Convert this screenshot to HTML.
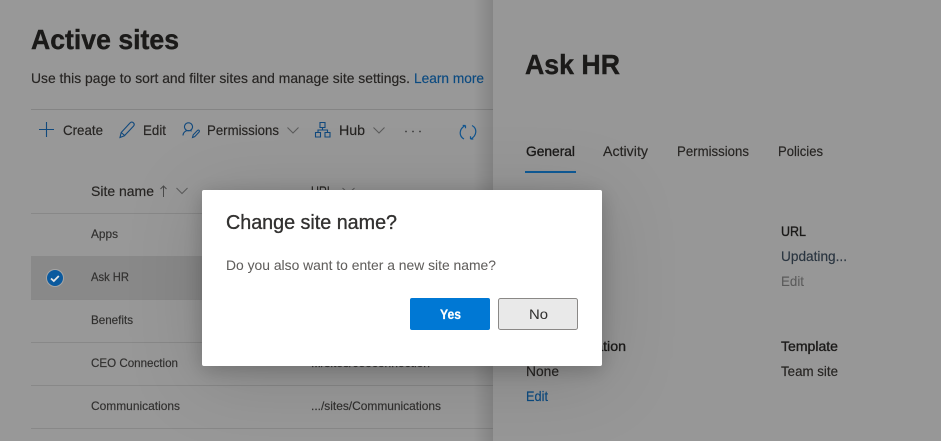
<!DOCTYPE html>
<html lang="en"><head><meta charset="utf-8"><title>Active sites</title>
<style>
html,body{margin:0;padding:0;width:941px;height:441px;overflow:hidden;background:#989898}
svg{display:block;position:absolute;left:0;top:0}
text{font-family:"Liberation Sans",Arial,sans-serif;white-space:pre;fill:currentColor;stroke:currentColor;stroke-width:.16}
text.b{font-weight:bold;stroke-width:.4}
text.m{stroke-width:.34}
text.l{stroke-width:.04}
.i{fill:none;stroke:#11497d;stroke-width:1.1}
.c{fill:none;stroke:#5a5a5a;stroke-width:1}
</style></head><body>
<svg width="941" height="441" viewBox="0 0 941 441" xmlns="http://www.w3.org/2000/svg">
<defs>
<linearGradient id="s" x1="0" x2="1" y1="0" y2="0"><stop offset="0" stop-color="#000" stop-opacity="0"/><stop offset="1" stop-color="#000" stop-opacity=".13"/></linearGradient>
</defs>
<rect width="941" height="441" fill="#989898"/>
<text x="31" y="49" class="b" font-size="28" color="#1b1a19" textLength="148" lengthAdjust="spacingAndGlyphs">Active sites</text>
<text x="31" y="83" font-size="14" color="#262422" textLength="379" lengthAdjust="spacingAndGlyphs">Use this page to sort and filter sites and manage site settings.</text>
<text x="414" y="83" font-size="14" color="#0b4a80" textLength="70" lengthAdjust="spacingAndGlyphs">Learn more</text>
<rect x="31" y="109" width="462" height="1" fill="#848484"/>

<path class="i" d="M46.500 122v15M39 129.500h15"/>
<text x="63" y="135" font-size="14" color="#262422" textLength="40" lengthAdjust="spacingAndGlyphs">Create</text>
<path class="i" d="M120 137.500l1.200-5 8.800-9.500c1-1 2.300-1.200 3.400-.2s1 2.300 0 3.400l-9 9.600zM121.200 132.500l3.400 3"/>
<text x="143" y="135" font-size="14" color="#262422" textLength="23" lengthAdjust="spacingAndGlyphs">Edit</text>
<path class="i" d="M188.500 122.800a4 4 0 1 0 .01 0zM183 135.500c0-3 2.500-5 5.500-5 1.300 0 2.300.2 3.200.7M192.500 137.500l.7-2.600 4.300-4.500c1.400-1 2.500.6 1.500 1.700l-4.300 4.600z"/>
<text x="207" y="135" font-size="14" color="#262422" textLength="72" lengthAdjust="spacingAndGlyphs">Permissions</text>
<path class="c" d="M287.500 127.500l5.500 5.500 5.500-5.500"/>
<path class="i" d="M320 122.500h5v5h-5zM315.500 132.500h5v4.500h-5zM325 132.500h5v4.500h-5zM322.500 127.500v2.500M318 132.500v-2.500h9.500v2.500"/>
<text x="339" y="135" font-size="14" color="#262422" textLength="26" lengthAdjust="spacingAndGlyphs">Hub</text>
<path class="c" d="M373.500 127.500l5.500 5.500 5.500-5.500"/>
<circle cx="406" cy="131.500" r=".9" fill="#3c3c3c"/><circle cx="413" cy="131.500" r=".9" fill="#3c3c3c"/><circle cx="420" cy="131.500" r=".9" fill="#3c3c3c"/>
<path fill="none" stroke="#11558f" stroke-width="1.200" d="M465.500 125.500c-6.500 3-7 10.500-1.500 13.500M470.500 139c6.500-3 7-10.500 1.500-13.500M465.500 125.500h-2.800M465.500 125.500v2.800M470.500 139h2.800M470.500 139v-2.800"/>

<text x="91" y="196" font-size="14" color="#262422" textLength="63" lengthAdjust="spacingAndGlyphs">Site name</text>
<path fill="none" stroke="#4a4a4a" d="M163.500 197v-11M160.500 189l3-3 3 3"/>
<path class="c" d="M176.500 188l5.500 5.500 5.500-5.500"/>
<text x="311" y="196" font-size="14" color="#262422" textLength="22" lengthAdjust="spacingAndGlyphs">URL</text>
<path class="c" d="M342.500 188l6 5.500 6-5.500"/>

<rect x="31" y="213" width="462" height="1" fill="#888"/>
<rect x="31" y="256" width="462" height="43" fill="#898989"/>
<rect x="31" y="342" width="462" height="1" fill="#888"/>
<rect x="31" y="385" width="462" height="1" fill="#888"/>
<rect x="31" y="428" width="462" height="1" fill="#888"/>
<rect x="31" y="299" width="462" height="1" fill="#888"/>

<circle cx="55" cy="278" r="8.500" fill="#0b5a9e" stroke="#a5a5a5" stroke-width="1"/>
<path fill="none" stroke="#e5e5e5" stroke-width="1.800" d="M51 278.500l2.800 2.500 5-5"/>
<text x="91" y="238" font-size="12" color="#302f2e" textLength="27" lengthAdjust="spacingAndGlyphs">Apps</text>
<text x="91" y="281" font-size="12" color="#302f2e" textLength="38" lengthAdjust="spacingAndGlyphs">Ask HR</text>
<text x="91" y="324" font-size="12" color="#302f2e" textLength="42" lengthAdjust="spacingAndGlyphs">Benefits</text>
<text x="91" y="367" font-size="12" color="#302f2e" textLength="87" lengthAdjust="spacingAndGlyphs">CEO Connection</text>
<text x="91" y="410" font-size="12" color="#302f2e" textLength="89" lengthAdjust="spacingAndGlyphs">Communications</text>
<text x="311" y="367" font-size="12" color="#302f2e" textLength="119" lengthAdjust="spacingAndGlyphs">.../sites/ceoconnection</text>
<text x="311" y="410" font-size="12" color="#302f2e" textLength="130" lengthAdjust="spacingAndGlyphs">.../sites/Communications</text>

<rect x="473" y="0" width="20" height="441" fill="url(#s)"/>
<rect x="493" y="0" width="448" height="441" fill="#979797"/>
<text x="525" y="74" class="b" font-size="28" color="#1b1a19" textLength="95" lengthAdjust="spacingAndGlyphs">Ask HR</text>
<text x="526" y="156" class="m" font-size="14" color="#1b1a19" textLength="49" lengthAdjust="spacingAndGlyphs">General</text>
<text x="603" y="156" font-size="14" color="#262422" textLength="45" lengthAdjust="spacingAndGlyphs">Activity</text>
<text x="677" y="156" font-size="14" color="#262422" textLength="72" lengthAdjust="spacingAndGlyphs">Permissions</text>
<text x="778" y="156" font-size="14" color="#262422" textLength="45" lengthAdjust="spacingAndGlyphs">Policies</text>
<rect x="525" y="171" width="51" height="2" fill="#0f5a96"/>
<text x="781" y="236" class="m" font-size="14" color="#1b1a19" textLength="25" lengthAdjust="spacingAndGlyphs">URL</text>
<text x="781" y="261" font-size="14" color="#2a3540" textLength="66" lengthAdjust="spacingAndGlyphs">Updating...</text>
<text x="781" y="286" class="l" font-size="14" color="#5a5a5a" textLength="23" lengthAdjust="spacingAndGlyphs">Edit</text>
<text x="525" y="351" class="m" font-size="14" color="#1b1a19" textLength="101" lengthAdjust="spacingAndGlyphs">Hub association</text>
<text x="526" y="376" font-size="14" color="#262422" textLength="33" lengthAdjust="spacingAndGlyphs">None</text>
<text x="526" y="401" font-size="14" color="#0b4a80" textLength="22" lengthAdjust="spacingAndGlyphs">Edit</text>
<text x="781" y="351" class="m" font-size="14" color="#1b1a19" textLength="57" lengthAdjust="spacingAndGlyphs">Template</text>
<text x="781" y="376" font-size="14" color="#262422" textLength="57" lengthAdjust="spacingAndGlyphs">Team site</text>

<rect x="202" y="190" width="400" height="176" rx="2" fill="#fff" style="filter:drop-shadow(0 4px 10px rgba(0,0,0,.2)) drop-shadow(0 10px 36px rgba(0,0,0,.14))"/>
<text x="226" y="229" class="m" font-size="20" color="#323130" textLength="171" lengthAdjust="spacingAndGlyphs">Change site name?</text>
<text x="226" y="270" class="l" font-size="14" color="#605e5c" textLength="270" lengthAdjust="spacingAndGlyphs">Do you also want to enter a new site name?</text>
<rect x="410" y="298" width="80" height="32" rx="2" fill="#0078d4"/>
<text x="440" y="319" class="b" font-size="14" color="#fff" style="stroke-width:.2" textLength="21" lengthAdjust="spacingAndGlyphs">Yes</text>
<rect x="498.500" y="298.500" width="79" height="31" rx="2" fill="#e9e9e9" stroke="#8a8886"/>
<text x="529" y="319" class="l" font-size="14" color="#323130" textLength="19" lengthAdjust="spacingAndGlyphs">No</text>
</svg>
</body></html>
